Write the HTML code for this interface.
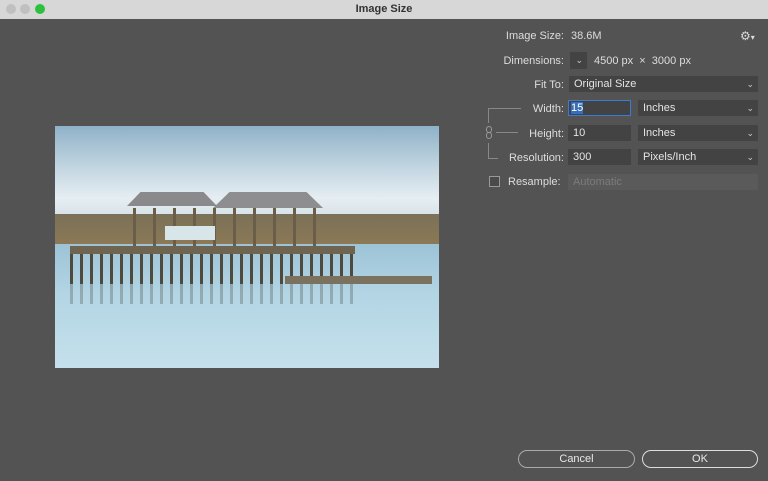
<!DOCTYPE html>
<html><head><style>
body{margin:0;width:768px;height:481px;background:#535353;font-family:"Liberation Sans",sans-serif;font-size:11px;color:#ddd;position:relative;overflow:hidden}
.t{position:absolute;height:19px;top:0;left:0;right:0;background:#d7d7d7;text-align:center;line-height:18px;font-weight:bold;color:#333;font-size:11px}
.dot{position:absolute;top:4px;width:10px;height:10px;border-radius:50%}
.a{position:absolute}
.l{position:absolute;text-align:right;width:80px;left:484px}
.f{position:absolute;background:#434343;height:16px;line-height:16px;padding-left:5px;box-sizing:border-box;color:#e4e4e4}
.chev{position:absolute;right:4px;top:0;font-size:9px;color:#ccc}
.btn{position:absolute;top:450px;height:18px;border:1px solid #aaa;border-radius:10px;box-sizing:border-box;text-align:center;line-height:16px;color:#e8e8e8}
</style></head><body>
<div class="t">Image Size</div>
<div class="dot" style="left:6px;background:#c0c0c0"></div>
<div class="dot" style="left:20px;background:#c0c0c0"></div>
<div class="dot" style="left:35px;background:#2cc13c"></div>

<div class="a" style="left:55px;top:126px;width:384px;height:242px;overflow:hidden;background:linear-gradient(#8fb2c8 0%,#c5d7e2 18%,#e6eef2 30%,#d9e4ea 36%)">
 <div class="a" style="left:0;top:88px;width:384px;height:34px;background:linear-gradient(#7a7058,#8e7a55)"></div>
 <div class="a" style="left:0;top:118px;width:384px;height:124px;background:linear-gradient(#9cc3d6,#b3d5e4 40%,#c5e0ec)"></div>
 <div class="a" style="left:72px;top:66px;width:90px;height:14px;background:#8a8a8c;clip-path:polygon(15% 0,85% 0,100% 100%,0 100%)"></div>
 <div class="a" style="left:158px;top:66px;width:110px;height:16px;background:#8e8e90;clip-path:polygon(15% 0,85% 0,100% 100%,0 100%)"></div>
 <div class="a" style="left:78px;top:82px;width:185px;height:40px;background:repeating-linear-gradient(90deg,#6a5e48 0 3px,transparent 3px 20px)"></div>
 <div class="a" style="left:110px;top:100px;width:50px;height:14px;background:#d8e6ea"></div>
 <div class="a" style="left:15px;top:120px;width:285px;height:8px;background:#6e6450"></div>
 <div class="a" style="left:15px;top:128px;width:285px;height:30px;background:repeating-linear-gradient(90deg,#4f4a3e 0 3px,transparent 3px 10px)"></div>
 <div class="a" style="left:230px;top:150px;width:147px;height:8px;background:#7a725e"></div>
 <div class="a" style="left:15px;top:158px;width:290px;height:20px;background:repeating-linear-gradient(90deg,rgba(80,90,90,.35) 0 3px,transparent 3px 10px)"></div>
</div>

<div class="l" style="top:30px">Image Size:</div><div class="a" style="left:571px;top:30px">38.6M</div>
<div class="a" style="left:740px;top:29px;color:#ddd;font-size:12px">⚙<span style="font-size:8px">▾</span></div>
<div class="l" style="top:55px">Dimensions:</div>
<div class="f" style="left:570px;top:52px;width:17px;height:17px"><span class="chev" style="right:4px">⌄</span></div>
<div class="a" style="left:594px;top:55px">4500 px &nbsp;×&nbsp; 3000 px</div>
<div class="l" style="top:79px">Fit To:</div>
<div class="f" style="left:569px;top:76px;width:189px">Original Size<span class="chev">⌄</span></div>
<div class="l" style="top:103px">Width:</div>
<div class="f" style="left:568px;top:100px;width:63px;border:1px solid #3a7bd5;padding-left:2px;line-height:14px"><span style="background:#3a6fb8;color:#fff">15</span></div>
<div class="f" style="left:638px;top:100px;width:120px">Inches<span class="chev">⌄</span></div>
<div class="l" style="top:128px">Height:</div>
<div class="f" style="left:568px;top:125px;width:63px">10</div>
<div class="f" style="left:638px;top:125px;width:120px">Inches<span class="chev">⌄</span></div>
<div class="l" style="top:152px">Resolution:</div>
<div class="f" style="left:568px;top:149px;width:63px">300</div>
<div class="f" style="left:638px;top:149px;width:120px">Pixels/Inch<span class="chev">⌄</span></div>
<div class="a" style="left:489px;top:176px;width:9px;height:9px;border:1px solid #999;background:#4a4a4a"></div>
<div class="a" style="left:508px;top:176px">Resample:</div>
<div class="f" style="left:568px;top:174px;width:190px;background:#5a5a5a;color:#7c7c7c">Automatic</div>
<div class="a" style="left:488px;top:108px;width:33px;height:1px;background:#888"></div>
<div class="a" style="left:488px;top:108px;width:1px;height:15px;background:#888"></div>
<div class="a" style="left:488px;top:143px;width:1px;height:15px;background:#888"></div>
<div class="a" style="left:488px;top:158px;width:10px;height:1px;background:#888"></div>
<div class="a" style="left:496px;top:132px;width:22px;height:1px;background:#888"></div>
<div class="a" style="left:486px;top:126px;width:4px;height:5px;border:1px solid #999;border-radius:3px"></div>
<div class="a" style="left:486px;top:132px;width:4px;height:5px;border:1px solid #999;border-radius:3px"></div>
<div class="btn" style="left:518px;width:117px">Cancel</div>
<div class="btn" style="left:642px;width:116px;border-color:#ddd">OK</div>
</body></html>
